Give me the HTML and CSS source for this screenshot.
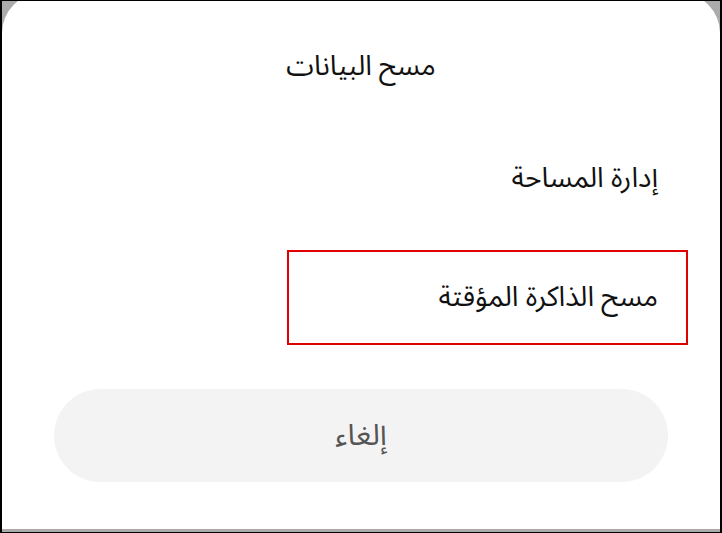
FILE: index.html
```html
<!DOCTYPE html>
<html lang="ar" dir="rtl">
<head>
<meta charset="utf-8">
<link rel="stylesheet" href="styles.css">
</head>
<body>
<div class="frame">
  <div class="dialog">
    <h1 class="title">مسح البيانات</h1>
    <ul class="options">
      <li class="option">إدارة المساحة</li>
      <li class="option option--marked">مسح الذاكرة المؤقتة<span class="mark"></span></li>
    </ul>
    <div class="actions">
      <button class="cancel">إلغاء</button>
    </div>
  </div>
</div>
</body>
</html>
```
FILE: styles.css
```css
* { box-sizing: border-box; }
html, body { margin: 0; padding: 0; }
body {
  width: 722px;
  height: 533px;
  background: #000;
  font-family: "Noto Sans Arabic", "DejaVu Sans", sans-serif;
  overflow: hidden;
}
.frame {
  width: 722px;
  height: 533px;
  border-style: solid;
  border-color: #000;
  border-width: 1px 2px 1px 2px;
  background: #ababab;
  overflow: hidden;
}
.dialog {
  margin-top: -8px;
  height: 536px;
  background: #fff;
  border-radius: 40px 40px 0 0;
  display: flex;
  flex-direction: column;
  direction: rtl;
}
.title {
  margin: 0;
  padding-top: 56px;
  height: 125.5px;
  font-size: 28px;
  line-height: 36px;
  font-weight: normal;
  text-align: center;
  color: #111;
}
.options {
  list-style: none;
  margin: 0;
  padding: 0;
}
.option {
  position: relative;
  height: 119px;
  display: flex;
  align-items: center;
  padding-right: 62px;
  font-size: 28px;
  color: #111;
}
.mark {
  position: absolute;
  top: 12px;
  right: 32px;
  width: 401px;
  height: 95px;
  border: 2px solid #e00000;
}
.actions {
  padding: 32px 52px 0;
}
.cancel {
  display: block;
  width: 100%;
  height: 93px;
  border: none;
  border-radius: 47px;
  background: #f3f3f3;
  font-family: inherit;
  font-size: 30px;
  color: #555;
}
```
